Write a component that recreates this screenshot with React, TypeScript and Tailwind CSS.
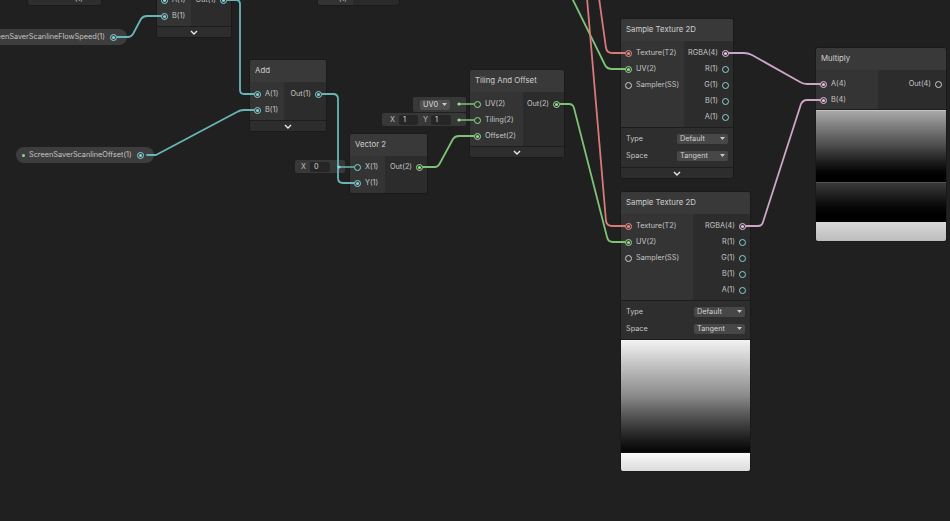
import React from 'react';

type Kind = 'teal' | 'green' | 'red' | 'pink' | 'gray';
type P = { label: string; kind: Kind; on?: boolean };

const RING: Record<Kind, string> = {
  teal: 'border-[#86d3d6]',
  green: 'border-[#98df90]',
  red: 'border-[#f08d8d]',
  pink: 'border-[#e8bfe2]',
  gray: 'border-[#cfcfcf]',
};
const FILL: Record<Kind, string> = {
  teal: 'bg-[#86d3d6]',
  green: 'bg-[#98df90]',
  red: 'bg-[#f08d8d]',
  pink: 'bg-[#e8bfe2]',
  gray: 'bg-[#cfcfcf]',
};

function PortDot({ kind, on }: { kind: Kind; on?: boolean }) {
  return (
    <span className={`flex h-[7px] w-[7px] shrink-0 items-center justify-center rounded-full border ${RING[kind]}`}>
      {on && <span className={`h-[3px] w-[3px] rounded-full ${FILL[kind]}`} />}
    </span>
  );
}

function Caret() {
  return (
    <svg width="5" height="3" viewBox="0 0 5 3" className="shrink-0">
      <polygon points="0,0 5,0 2.5,3" fill="#c8c8c8" />
    </svg>
  );
}

function Footer() {
  return (
    <div className="flex h-[11px] items-center justify-center border-t border-[#1d1d1d] bg-[#2d2d2d]">
      <svg width="8" height="5" viewBox="0 0 8 5">
        <path d="M1 1 L4 4 L7 1" stroke="#e8e8e8" strokeWidth="1.4" fill="none" />
      </svg>
    </div>
  );
}

function Settings({ pb }: { pb: string }) {
  const rows: [string, string][] = [
    ['Type', 'Default'],
    ['Space', 'Tangent'],
  ];
  return (
    <div className={`border-t border-[#1d1d1d] bg-[#2e2e2e] px-[5px] pt-[2px] ${pb}`}>
      {rows.map(([l, v]) => (
        <div key={l} className="flex h-[17px] items-center justify-between">
          <span className="leading-none">{l}</span>
          <div className="flex h-[10px] w-[51px] items-center justify-between rounded-[2px] bg-[#474747] px-[3px] text-[#d2d2d2]">
            <span className="leading-none">{v}</span>
            <Caret />
          </div>
        </div>
      ))}
    </div>
  );
}

function Node({
  pos,
  inW,
  title,
  inputs,
  outputs,
  pt = 'pt-[4px]',
  pb = 'pb-[2px]',
  footer,
  children,
}: {
  pos: string;
  inW: string;
  title: string;
  inputs: P[];
  outputs: P[];
  pt?: string;
  pb?: string;
  footer?: boolean;
  children?: React.ReactNode;
}) {
  return (
    <div className={`absolute ${pos} overflow-hidden rounded-[3px] border border-[#1a1a1a] bg-[#2c2c2c]`}>
      <div className="flex h-[22px] items-center whitespace-nowrap bg-[#393939] pl-[5px] text-[7.8px] leading-none text-[#cfcfcf]">
        {title}
      </div>
      <div className="flex">
        <div className={`flex shrink-0 flex-col bg-[#343434] ${inW} ${pt} ${pb}`}>
          {inputs.map((p) => (
            <div key={p.label} className="flex h-4 items-center gap-[4px] whitespace-nowrap pl-[4px]">
              <PortDot kind={p.kind} on={p.on} />
              <span className="leading-none">{p.label}</span>
            </div>
          ))}
        </div>
        <div className={`flex flex-1 flex-col items-end ${pt} ${pb}`}>
          {outputs.map((p) => (
            <div key={p.label} className="flex h-4 items-center gap-[4px] whitespace-nowrap pr-[4px]">
              <span className="leading-none">{p.label}</span>
              <PortDot kind={p.kind} on={p.on} />
            </div>
          ))}
        </div>
      </div>
      {children}
      {footer && <Footer />}
    </div>
  );
}

function Pill({ pos, text }: { pos: string; text: string }) {
  return (
    <div className={`absolute ${pos} flex h-[16px] items-center whitespace-nowrap rounded-full bg-[#3d3d3d] pl-[6px] pr-[10px]`}>
      <span className="h-[3px] w-[3px] shrink-0 rounded-full bg-[#8fd68a]" />
      <span className="ml-[4px] leading-none">{text}</span>
      <span className="ml-[5px]">
        <PortDot kind="teal" on />
      </span>
    </div>
  );
}

const T = (label: string, on?: boolean): P => ({ label, kind: 'teal', on });
const G = (label: string, on?: boolean): P => ({ label, kind: 'green', on });

export default function App() {
  const sampleIn: P[] = [
    { label: 'Texture(T2)', kind: 'red', on: true },
    G('UV(2)', true),
    { label: 'Sampler(SS)', kind: 'gray' },
  ];
  const sampleOut: P[] = [
    { label: 'RGBA(4)', kind: 'pink', on: true },
    T('R(1)'),
    T('G(1)'),
    T('B(1)'),
    T('A(1)'),
  ];

  return (
    <div className="relative h-[521px] w-[950px] overflow-hidden bg-[#202020] font-[family-name:Inter,sans-serif] text-[7.3px] text-[#c6c6c6]">
      {/* partial nodes at the top edge */}
      <div className="absolute left-[27px] top-[-20px] flex h-[26px] w-[75px] items-end justify-end rounded-[3px] border border-[#1a1a1a] bg-[#2e2e2e] pb-[3px] pr-[18px]">
        <span className="leading-none">(1)</span>
      </div>
      <div className="absolute left-[317px] top-[-20px] flex h-[26px] w-[83px] overflow-hidden rounded-[3px] border border-[#1a1a1a] bg-[#2a2a2a]">
        <div className="flex w-[35px] items-end justify-end bg-[#333333] pb-[3px] pr-[6px]">
          <span className="leading-none">(1)</span>
        </div>
      </div>

      <Node
        pos="left-[156px] top-[-35px] w-[76px]"
        inW="w-[34px]"
        title="Add"
        inputs={[T('A(1)', true), T('B(1)', true)]}
        outputs={[T('Out(1)', true)]}
        footer
      />

      <Pill pos="right-[823px] top-[29px]" text="ScreenSaverScanlineFlowSpeed(1)" />
      <Pill pos="left-[16px] top-[147px]" text="ScreenSaverScanlineOffset(1)" />

      <Node
        pos="left-[249px] top-[59px] w-[78px]"
        inW="w-[34px]"
        title="Add"
        inputs={[T('A(1)', true), T('B(1)', true)]}
        outputs={[T('Out(1)', true)]}
        footer
      />

      {/* Vector 2 inline X field */}
      <div className="absolute left-[295px] top-[160px] flex h-[13px] w-[50px] items-center rounded-[2px] bg-[#383838] pl-[6px]">
        <span className="leading-none text-[#bdbdbd]">X</span>
        <div className="ml-[4px] flex h-[10px] w-[20px] items-center rounded-[2px] bg-[#262626] pl-[4px] text-[#d0d0d0]">
          <span className="leading-none">0</span>
        </div>
      </div>

      <Node
        pos="left-[349px] top-[133px] w-[79px]"
        inW="w-[35px]"
        title="Vector 2"
        pt="pt-[3px]"
        inputs={[T('X(1)'), T('Y(1)', true)]}
        outputs={[G('Out(2)', true)]}
      />

      {/* Tiling inline fields */}
      <div className="absolute left-[413px] top-[97px] flex h-[15px] w-[53px] items-center rounded-[2px] bg-[#383838] pl-[7px]">
        <div className="flex h-[10px] w-[30px] items-center justify-between rounded-[2px] bg-[#505050] px-[3px] text-[#d8d8d8]">
          <span className="leading-none">UV0</span>
          <Caret />
        </div>
      </div>
      <div className="absolute left-[382px] top-[113px] flex h-[13px] w-[84px] items-center rounded-[2px] bg-[#383838] pl-[8px]">
        <span className="leading-none text-[#bdbdbd]">X</span>
        <div className="ml-[4px] flex h-[10px] w-[19px] items-center rounded-[2px] bg-[#262626] pl-[4px] text-[#d0d0d0]">
          <span className="leading-none">1</span>
        </div>
        <span className="ml-[5px] leading-none text-[#bdbdbd]">Y</span>
        <div className="ml-[3px] flex h-[10px] w-[20px] items-center rounded-[2px] bg-[#262626] pl-[4px] text-[#d0d0d0]">
          <span className="leading-none">1</span>
        </div>
      </div>

      <Node
        pos="left-[469px] top-[69px] w-[96px]"
        inW="w-[53px]"
        title="Tiling And Offset"
        inputs={[G('UV(2)'), G('Tiling(2)'), G('Offset(2)', true)]}
        outputs={[G('Out(2)', true)]}
        footer
      />

      <Node
        pos="left-[620px] top-[18px] w-[114px]"
        inW="w-[63px]"
        title="Sample Texture 2D"
        inputs={sampleIn}
        outputs={sampleOut}
        footer
      >
        <Settings pb="pb-[3px]" />
      </Node>

      <Node
        pos="left-[620px] top-[191px] w-[131px]"
        inW="w-[72px]"
        title="Sample Texture 2D"
        inputs={sampleIn}
        outputs={sampleOut}
      >
        <Settings pb="pb-[2px]" />
        <div className="border-t border-[#1d1d1d]">
          <div className="h-[112px] bg-linear-to-b from-[#f3f3f3] via-[#8a8a8a] to-[#050505]" />
          <div className="h-[19px] border-t border-[#111111] bg-linear-to-b from-[#f8f8f8] to-[#dcdcdc]" />
        </div>
      </Node>

      <Node
        pos="left-[815px] top-[47px] w-[132px]"
        inW="w-[62px]"
        title="Multiply"
        pt="pt-[6px]"
        pb="pb-[1px]"
        inputs={[
          { label: 'A(4)', kind: 'pink', on: true },
          { label: 'B(4)', kind: 'pink', on: true },
        ]}
        outputs={[{ label: 'Out(4)', kind: 'gray' }]}
      >
        <div className="border-t border-[#1d1d1d]">
          <div className="h-[72px] border-t border-[#c4c4c4] bg-linear-to-b from-[#a9a9a9] via-[#4a4a4a] to-[#000000]" />
          <div className="h-[40px] border-t border-[#555555] bg-linear-to-b from-[#3a3a3a] to-[#000000]" />
          <div className="h-[19px] bg-linear-to-b from-[#d8d8d8] to-[#bdbdbd]" />
        </div>
      </Node>

      {/* edges */}
      <svg className="pointer-events-none absolute inset-0" width="950" height="521" viewBox="0 0 950 521" fill="none">
        <g stroke="#68b5b9" strokeWidth="1.8" strokeLinejoin="round" strokeLinecap="round">
          <path d="M227,0 H236 Q240,0 240,4 V90 Q240,94 244,94 H254" />
          <path d="M117,37 H128 Q131,37 133,34 L141,19 Q143,16 147,16 H161" />
          <path d="M147,155 H156 L237,112 Q240,110 244,110 H254" />
          <path d="M322,94 H333 Q338,94 338,99 V178 Q338,183 343,183 H354" />
          <path d="M340,167 H354" strokeWidth="1.5" />
        </g>
        <circle cx="339" cy="167" r="1.6" fill="#86d3d6" />
        <g stroke="#7dc276" strokeWidth="1.8" strokeLinejoin="round" strokeLinecap="round">
          <path d="M423,167 H435 Q438,167 440,163 L453,139 Q455,136 459,136 H474" />
          <path d="M560,104 H569 Q573,104 574,108 L607,237 Q608,242 613,242 H625" />
          <path d="M572,-2 L605,65 Q607,69 612,69 H625" />
          <path d="M460,104 H474" strokeWidth="1.5" />
          <path d="M460,120 H474" strokeWidth="1.5" />
        </g>
        <circle cx="459" cy="104" r="1.6" fill="#98df90" />
        <circle cx="459" cy="120" r="1.6" fill="#98df90" />
        <g stroke="#d87a7a" strokeWidth="1.8" strokeLinejoin="round" strokeLinecap="round">
          <path d="M599,-2 L606,48 Q607,53 612,53 H625" />
          <path d="M587,-2 L606,221 Q607,226 612,226 H625" />
        </g>
        <g stroke="#cda5c8" strokeWidth="1.8" strokeLinejoin="round" strokeLinecap="round">
          <path d="M729,53 H744 Q748,53 752,55 L800,82 Q803,84 807,84 H820" />
          <path d="M746,226 H758 Q762,226 763,222 L801,104 Q803,100 807,100 H820" />
        </g>
      </svg>
    </div>
  );
}
